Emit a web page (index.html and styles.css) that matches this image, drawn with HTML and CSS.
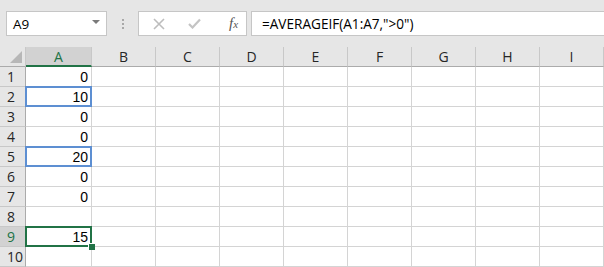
FILE: index.html
```html
<!DOCTYPE html>
<html>
<head>
<meta charset="utf-8">
<link rel="stylesheet" href="styles.css">
</head>
<body>
<div class="toolbar">
  <div class="namebox">
    <span class="name">A9</span>
    <span class="caret"></span>
  </div>
  <div class="grip"><i></i><i></i><i></i></div>
  <div class="fbuttons">
    <svg class="ico" width="12" height="12" viewBox="0 0 12 12"><path d="M1 1 L11 11 M11 1 L1 11" stroke="#bdbdbd" stroke-width="1.6" fill="none"/></svg>
    <svg class="ico" width="13" height="11" viewBox="0 0 13 11"><path d="M1 6 L4.5 9.5 L12 1.5" stroke="#c4c4c4" stroke-width="2.2" fill="none"/></svg>
    <span class="fx">f<sub>x</sub></span>
  </div>
  <div class="formula">=AVERAGEIF(A1:A7,"&gt;0")</div>
</div>
<div class="sheet">
  <div class="corner"><span class="tri"></span></div>
  <div class="ch sel">A</div>
  <div class="ch">B</div>
  <div class="ch">C</div>
  <div class="ch">D</div>
  <div class="ch">E</div>
  <div class="ch">F</div>
  <div class="ch">G</div>
  <div class="ch">H</div>
  <div class="ch">I</div>

  <div class="rh">1</div><div class="c num">0</div><div class="c"></div><div class="c"></div><div class="c"></div><div class="c"></div><div class="c"></div><div class="c"></div><div class="c"></div><div class="c"></div>
  <div class="rh">2</div><div class="c num blue">10</div><div class="c"></div><div class="c"></div><div class="c"></div><div class="c"></div><div class="c"></div><div class="c"></div><div class="c"></div><div class="c"></div>
  <div class="rh">3</div><div class="c num">0</div><div class="c"></div><div class="c"></div><div class="c"></div><div class="c"></div><div class="c"></div><div class="c"></div><div class="c"></div><div class="c"></div>
  <div class="rh">4</div><div class="c num">0</div><div class="c"></div><div class="c"></div><div class="c"></div><div class="c"></div><div class="c"></div><div class="c"></div><div class="c"></div><div class="c"></div>
  <div class="rh">5</div><div class="c num blue">20</div><div class="c"></div><div class="c"></div><div class="c"></div><div class="c"></div><div class="c"></div><div class="c"></div><div class="c"></div><div class="c"></div>
  <div class="rh">6</div><div class="c num">0</div><div class="c"></div><div class="c"></div><div class="c"></div><div class="c"></div><div class="c"></div><div class="c"></div><div class="c"></div><div class="c"></div>
  <div class="rh">7</div><div class="c num">0</div><div class="c"></div><div class="c"></div><div class="c"></div><div class="c"></div><div class="c"></div><div class="c"></div><div class="c"></div><div class="c"></div>
  <div class="rh">8</div><div class="c num"></div><div class="c"></div><div class="c"></div><div class="c"></div><div class="c"></div><div class="c"></div><div class="c"></div><div class="c"></div><div class="c"></div>
  <div class="rh sel">9</div><div class="c num active">15<span class="handle"></span></div><div class="c"></div><div class="c"></div><div class="c"></div><div class="c"></div><div class="c"></div><div class="c"></div><div class="c"></div><div class="c"></div>
  <div class="rh">10</div><div class="c num"></div><div class="c"></div><div class="c"></div><div class="c"></div><div class="c"></div><div class="c"></div><div class="c"></div><div class="c"></div><div class="c"></div>
</div>
</body>
</html>
```
FILE: styles.css
```css
* { box-sizing: border-box; }
html, body { margin: 0; padding: 0; }
body {
  width: 604px;
  height: 267px;
  overflow: hidden;
  background: #ffffff;
  font-family: "Open Sans", "Liberation Sans", sans-serif;
  color: #000;
}
.toolbar {
  height: 47px;
  background: #e6e6e6;
  display: flex;
  align-items: flex-start;
  padding-top: 11px;
  padding-left: 6px;
}
.namebox {
  width: 101px;
  height: 25px;
  background: #fff;
  border: 1px solid #c6c6c6;
  display: flex;
  align-items: center;
  justify-content: space-between;
  padding: 0 6px 0 6px;
  font-size: 13.5px;
}
.caret {
  width: 0; height: 0;
  border-left: 4px solid transparent;
  border-right: 4px solid transparent;
  border-top: 4px solid #7a7a7a;
  margin-top: -3px;
}
.grip {
  width: 31px;
  height: 25px;
  display: flex;
  flex-direction: column;
  align-items: center;
  justify-content: center;
  gap: 2px;
}
.grip i {
  display: block;
  width: 2px;
  height: 2px;
  background: #a8a8a8;
}
.fbuttons {
  width: 109px;
  height: 25px;
  background: #fff;
  border: 1px solid #c6c6c6;
  display: flex;
  align-items: center;
  padding-left: 14px;
  gap: 23px;
}
.fx {
  font-family: "Liberation Serif", serif;
  font-style: italic;
  font-size: 15px;
  color: #555;
  margin-left: 5px;
  line-height: 1;
}
.fx sub {
  font-size: 11px;
  vertical-align: 0;
}
.formula {
  flex: 1;
  margin-left: 4px;
  height: 25px;
  background: #fff;
  border: 1px solid #c6c6c6;
  border-right: none;
  font-size: 13.6px;
  line-height: 23px;
  padding-left: 10px;
}
.sheet {
  display: grid;
  grid-template-columns: 26px 66px repeat(8, 64px);
  grid-template-rows: 20px repeat(10, 20px);
}
.corner, .ch, .rh {
  background: #e6e6e6;
  color: #262626;
  font-size: 14px;
}
.corner {
  border-right: 1px solid #c8c8c8;
  border-bottom: 1px solid #ababab;
  position: relative;
}
.tri {
  position: absolute;
  right: 3px;
  bottom: 3px;
  width: 0; height: 0;
  border-left: 12px solid transparent;
  border-bottom: 12px solid #b7b7b7;
}
.ch {
  border-right: 1px solid #c8c8c8;
  border-bottom: 1px solid #ababab;
  display: flex;
  align-items: center;
  justify-content: center;
}
.ch.sel {
  background: #d2d2d2;
  color: #217346;
  border-bottom: 2px solid #217346;
}
.rh {
  border-right: 1px solid #ababab;
  border-bottom: 1px solid #c8c8c8;
  display: flex;
  align-items: center;
  padding-left: 7px;
}
.rh.sel {
  background: #d2d2d2;
  color: #217346;
}
.c {
  border-right: 1px solid #d4d4d4;
  border-bottom: 1px solid #d4d4d4;
  line-height: 20px;
  position: relative;
}
.num {
  text-align: right;
  padding-right: 3px;
  font-family: "Liberation Sans", sans-serif;
  font-size: 14px;
}
.blue::after {
  content: "";
  position: absolute;
  left: -1px; top: -1px; right: -1px; bottom: -1px;
  border: 2px solid #5d8fd2;
}
.active::after {
  content: "";
  position: absolute;
  left: -1px; top: -1px; right: -1px; bottom: -1px;
  border: 2px solid #217346;
}
.handle {
  position: absolute;
  right: -4px;
  bottom: -4px;
  width: 7px;
  height: 7px;
  background: #217346;
  border-left: 1px solid #fff;
  border-top: 1px solid #fff;
  z-index: 2;
}
```
